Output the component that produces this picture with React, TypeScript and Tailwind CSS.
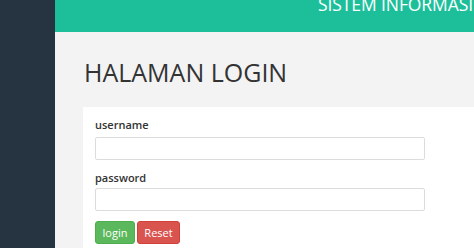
import React from "react";

export default function App() {
  return (
    <div
      className="flex w-[474px] h-[248px] overflow-hidden bg-[#f3f3f3]"
      style={{ fontFamily: '"Open Sans", "Liberation Sans", sans-serif' }}
    >
      <aside className="w-[55px] shrink-0 h-full bg-[#263341]" />
      <div className="flex-1 flex flex-col min-w-0">
        <header className="h-[32px] shrink-0 bg-[#1dbf9b] overflow-hidden flex items-start pl-[263px]">
          <span className="whitespace-nowrap text-white text-[17.5px] leading-none -mt-[4px] tracking-[-0.1px]">
            SISTEM INFORMASI AKADEMIK
          </span>
        </header>
        <main className="flex-1 pl-[28px] pt-[28px] flex flex-col">
          <h1 className="text-[25px] leading-none text-[#333] ml-[1px] mb-[22px]">HALAMAN LOGIN</h1>
          <div className="flex-1 bg-white pl-[12px] pt-[11px]">
            <label className="block text-[11px] font-semibold text-[#333] leading-[14px] mb-[5px]">username</label>
            <input className="block w-[330px] h-[23px] border border-[#dcdcdc] rounded-[2px] bg-white" />
            <label className="block text-[11px] font-semibold text-[#333] leading-[14px] mt-[11px] mb-[3px]">password</label>
            <input type="password" className="block w-[330px] h-[23px] border border-[#dcdcdc] rounded-[2px] bg-white" />
            <div className="flex gap-[2px] mt-[10px]">
              <button className="w-[40px] h-[23px] bg-[#5cb85c] border border-[#4cae4c] rounded-[3px] text-white text-[11px] leading-none">login</button>
              <button className="w-[43px] h-[23px] bg-[#d9534f] border border-[#d43f3a] rounded-[3px] text-white text-[11px] leading-none">Reset</button>
            </div>
          </div>
        </main>
      </div>
    </div>
  );
}
